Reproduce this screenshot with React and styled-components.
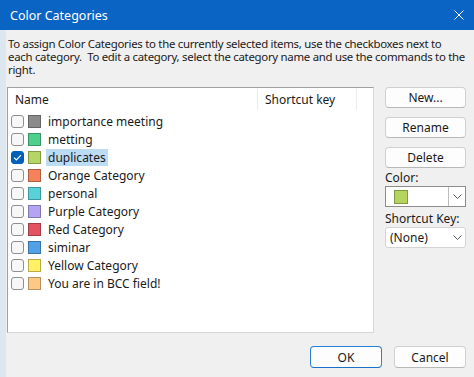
import React from 'react'
import styled, { createGlobalStyle } from 'styled-components'

const Global = createGlobalStyle`
  html, body { margin: 0; padding: 0; background: #f0f0f0; }
  body { font-family: "Noto Sans", "Open Sans", sans-serif; font-size: 12px; color: #1a1a1a; }
`

const Window = styled.div`
  width: 474px;
  height: 377px;
  display: flex;
  flex-direction: column;
  background: #f0f0f0;
  overflow: hidden;
`

const TitleBar = styled.div`
  height: 30px;
  flex: none;
  display: flex;
  align-items: center;
  justify-content: space-between;
  padding: 0 10px 0 10px;
  background: #0a64c4;
  color: #fff;
  font-size: 12.5px;
`

const Close = styled.svg`
  width: 10px;
  height: 10px;
`

const Body = styled.div`
  flex: 1;
  display: flex;
  flex-direction: column;
  border-left: 6px solid #dce7f0;
  border-bottom: 3px solid #dce7f0;
  padding: 7px 8px 0 1px;
`

const Intro = styled.p`
  margin: 0 0 11px 1px;
  line-height: 13px;
  font-size: 11.4px;
  letter-spacing: -0.28px;
  white-space: nowrap;
`

const Main = styled.div`
  display: flex;
  gap: 11px;
`

const ListBox = styled.div`
  width: 368px;
  height: 246px;
  box-sizing: border-box;
  background: #fff;
  border: 1px solid #a0a0a0;
  border-right-color: #d8d8d8;
  border-bottom-color: #d8d8d8;
`

const Header = styled.div`
  display: flex;
  height: 22px;
  margin-bottom: 2px;
`

const HeadCell = styled.div`
  width: ${p => p.$w}px;
  box-sizing: border-box;
  display: flex;
  align-items: center;
  padding-left: ${p => p.$pad}px;
  border-right: 1px solid #ececec;
`

const Row = styled.div`
  display: flex;
  align-items: center;
  height: 18px;
  padding-left: 3px;
`

const Check = styled.span`
  width: 13px;
  height: 13px;
  box-sizing: border-box;
  border-radius: 3px;
  border: 1px solid ${p => (p.$on ? '#005fb8' : '#8f8f8f')};
  background: ${p => (p.$on ? '#005fb8' : '#f7f7f7')};
  display: flex;
  align-items: center;
  justify-content: center;
`

const Swatch = styled.span`
  width: ${p => p.$size || 13}px;
  height: ${p => p.$size || 13}px;
  box-sizing: border-box;
  margin-left: 4px;
  background: ${p => p.$c};
  border: 1px solid rgba(0, 0, 0, 0.28);
`

const Label = styled.span`
  margin-left: 5px;
  padding: 0 2px;
  line-height: 17px;
  background: ${p => (p.$sel ? '#bcdcf4' : 'transparent')};
`

const Side = styled.div`
  width: 81px;
  display: flex;
  flex-direction: column;
`

const Button = styled.button`
  width: ${p => p.$w || 81}px;
  height: ${p => p.$h || 21}px;
  box-sizing: border-box;
  margin-bottom: 9px;
  font-family: inherit;
  font-size: 12px;
  color: #1a1a1a;
  background: #fdfdfd;
  border: 1px solid ${p => (p.$default ? '#2a80d6' : '#d0d0d0')};
  border-bottom-color: ${p => (p.$default ? '#1a6fc9' : '#b8b8b8')};
  border-radius: 4px;
  padding: 0;
`

const FieldLabel = styled.div`
  height: 17px;
  line-height: 17px;
  margin-top: ${p => p.$top || 0}px;
`

const Combo = styled.div`
  height: 21px;
  box-sizing: border-box;
  display: flex;
  align-items: center;
  background: #fff;
  border: 1px solid ${p => (p.$box ? '#8c8c8c' : '#d4d4d4')};
  border-radius: ${p => (p.$box ? 0 : 3)}px;
  padding-left: 4px;
`

const ComboValue = styled.div`
  flex: 1;
  display: flex;
  align-items: center;
`

const Arrow = styled.div`
  width: 16px;
  height: 100%;
  display: flex;
  align-items: center;
  justify-content: center;
  border-left: ${p => (p.$box ? '1px solid #bdbdbd' : 'none')};
`

const Footer = styled.div`
  display: flex;
  justify-content: flex-end;
  gap: 12px;
  margin-top: 13px;
`

const Chevron = () => (
  <svg width="9" height="5" viewBox="0 0 9 5">
    <path d="M0.5 0.5 L4.5 4.5 L8.5 0.5" fill="none" stroke="#555" strokeWidth="1" />
  </svg>
)

const categories = [
  { name: 'importance meeting', color: '#8b8b8b' },
  { name: 'metting', color: '#4fcf8c' },
  { name: 'duplicates', color: '#b5d565', checked: true },
  { name: 'Orange Category', color: '#f4825a' },
  { name: 'personal', color: '#57d2d9' },
  { name: 'Purple Category', color: '#b4a5f2' },
  { name: 'Red Category', color: '#e25464' },
  { name: 'siminar', color: '#51a1e6' },
  { name: 'Yellow Category', color: '#fff066' },
  { name: 'You are in BCC field!', color: '#ffc985' },
]

export default function App() {
  return (
    <Window>
      <Global />
      <TitleBar>
        <span>Color Categories</span>
        <Close viewBox="0 0 10 10">
          <path d="M0.5 0.5 L9.5 9.5 M9.5 0.5 L0.5 9.5" stroke="#fff" strokeWidth="1" />
        </Close>
      </TitleBar>
      <Body>
        <Intro>
          To assign Color Categories to the currently selected items, use the checkboxes next to
          <br />
          each category.&nbsp; To edit a category, select the category name and use the commands to the
          <br />
          right.
        </Intro>
        <Main>
          <ListBox>
            <Header>
              <HeadCell $w={250} $pad={7}>Name</HeadCell>
              <HeadCell $w={99} $pad={7}>Shortcut key</HeadCell>
            </Header>
            {categories.map(c => (
              <Row key={c.name}>
                <Check $on={c.checked}>
                  {c.checked && (
                    <svg width="9" height="7" viewBox="0 0 9 7">
                      <path d="M1 3.6 L3.4 6 L8 1.2" fill="none" stroke="#fff" strokeWidth="1.2" />
                    </svg>
                  )}
                </Check>
                <Swatch $c={c.color} />
                <Label $sel={c.checked}>{c.name}</Label>
              </Row>
            ))}
          </ListBox>
          <Side>
            <Button>New...</Button>
            <Button>Rename</Button>
            <Button>Delete</Button>
            <FieldLabel $top={-8}>Color:</FieldLabel>
            <Combo $box>
              <ComboValue>
                <Swatch $c="#b5d45e" $size={14} />
              </ComboValue>
              <Arrow $box>
                <Chevron />
              </Arrow>
            </Combo>
            <FieldLabel $top={3}>Shortcut Key:</FieldLabel>
            <Combo>
              <ComboValue>(None)</ComboValue>
              <Arrow>
                <Chevron />
              </Arrow>
            </Combo>
          </Side>
        </Main>
        <Footer>
          <Button $w={72} $h={22} $default>OK</Button>
          <Button $w={72} $h={22}>Cancel</Button>
        </Footer>
      </Body>
    </Window>
  )
}
